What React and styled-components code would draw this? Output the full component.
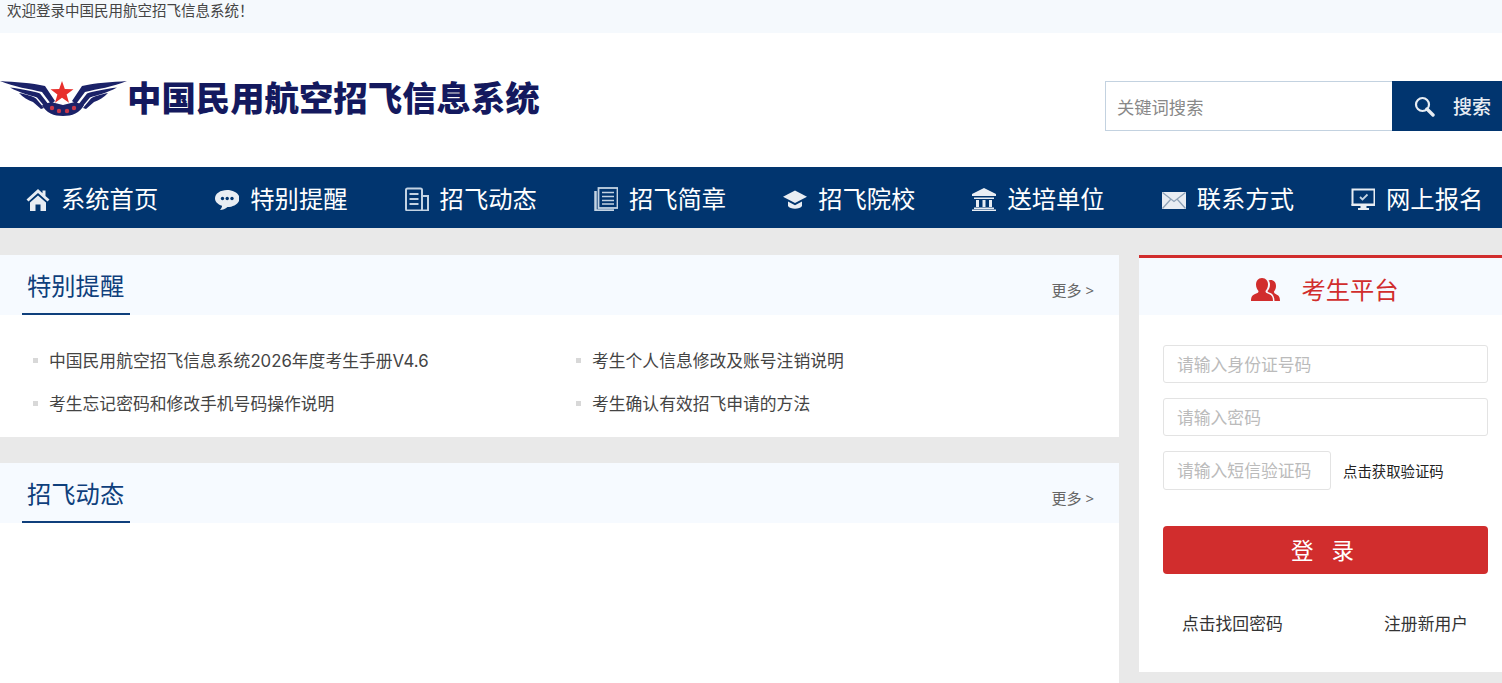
import React from 'react';
import styled, { createGlobalStyle } from 'styled-components';

const GlobalStyle = createGlobalStyle`
  html, body {
    margin: 0;
    padding: 0;
    height: 100%;
    overflow: hidden;
    background: #ffffff;
  }
  * {
    box-sizing: border-box;
  }
  body {
    font-family: 'Noto Sans', 'Noto Sans CJK SC', sans-serif;
  }
`;

const Page = styled.div`
  display: flex;
  flex-direction: column;
  width: 1502px;
  height: 683px;
  overflow: hidden;
`;

const TopBar = styled.div`
  flex: none;
  height: 33px;
  padding-left: 7px;
  background: #f5f9fd;
  color: #444;
  font-size: 14.5px;
  line-height: 20px;
`;

const Header = styled.header`
  flex: none;
  display: flex;
  justify-content: space-between;
  align-items: flex-start;
  height: 134px;
  padding-top: 48px;
`;

const Brand = styled.div`
  display: flex;
  align-items: center;
  height: 36px;
`;

const BrandName = styled.span`
  margin: -2px 0 0 -1px;
  color: #14195e;
  font-size: 34.4px;
  font-weight: 900;
  line-height: 36px;
  white-space: nowrap;
`;

const SearchBox = styled.form`
  display: flex;
  width: 397px;
  height: 50px;
  margin: 0;
`;

const SearchInput = styled.input`
  width: 287px;
  height: 50px;
  padding: 2px 11px 0;
  border: 1px solid #c3d2e0;
  border-right: none;
  outline: none;
  font-family: inherit;
  font-size: 17.3px;
  color: #444;

  &::placeholder {
    color: #888;
    opacity: 1;
  }
`;

const SearchButton = styled.button`
  display: flex;
  align-items: center;
  width: 110px;
  height: 50px;
  padding: 0 0 0 22px;
  gap: 18px;
  border: none;
  background: #01356f;
  color: #e8edf3;
  font-family: inherit;
  font-size: 19px;
  font-weight: 500;
`;

const Nav = styled.nav`
  flex: none;
  display: grid;
  grid-template-columns: repeat(8, 189.3px);
  height: 61px;
  padding-left: 26px;
  background: #01356f;
`;

const NavItem = styled.a`
  display: flex;
  align-items: center;
  gap: 11px;
  padding-top: 3px;
  color: #ffffff;
  font-size: 24.3px;
  line-height: 32px;
  white-space: nowrap;
`;

const NavIcon = styled.svg`
  flex: none;
  width: 24px;
  height: 24px;
`;

const Main = styled.main`
  flex: 1;
  display: flex;
  gap: 20px;
  padding-top: 27px;
  background: #e9e9e9;
  min-height: 0;
`;

const LeftColumn = styled.div`
  display: flex;
  flex-direction: column;
  gap: 26px;
  width: 1119px;
`;

const Panel = styled.section`
  flex: ${(p) => (p.$fill ? 1 : 'none')};
  background: #ffffff;
`;

const PanelHead = styled.div`
  display: flex;
  justify-content: space-between;
  align-items: flex-start;
  height: 60px;
  padding: 0 25px 0 22px;
  background: #f6faff;
`;

const PanelTitle = styled.h2`
  width: 108px;
  height: 60px;
  margin: 0;
  padding: 14px 0 0 5px;
  border-bottom: 2px solid #0f3f7c;
  color: #0f3f7c;
  font-size: 24.3px;
  font-weight: 400;
  line-height: 34px;
  white-space: nowrap;
`;

const More = styled.a`
  margin-top: 25px;
  color: #666;
  font-size: 15px;
  line-height: 20px;
`;

const NoticeList = styled.ul`
  display: grid;
  grid-template-columns: 543px 1fr;
  grid-auto-rows: 43px;
  height: 122px;
  margin: 0;
  padding: 24px 0 0 33px;
  list-style: none;
`;

const Notice = styled.li`
  display: flex;
  align-items: center;
  gap: 11px;
  height: 43px;
  color: #444;
  font-family: Inter, 'Noto Sans CJK SC', sans-serif;
  font-size: 16.8px;
  line-height: 24px;
  white-space: nowrap;

  &::before {
    content: '';
    flex: none;
    width: 5px;
    height: 5px;
    background: #d8d8d8;
  }
`;

const LoginPanel = styled.aside`
  width: 363px;
  height: 417px;
  border-top: 3px solid #d12d2d;
  background: #ffffff;
`;

const LoginHead = styled.div`
  display: flex;
  justify-content: center;
  align-items: center;
  gap: 21px;
  height: 57px;
  padding: 6px 0 0 9px;
  background: #f6faff;
  color: #d12d2d;
  font-size: 24.3px;
  line-height: 34px;
`;

const LoginForm = styled.form`
  display: flex;
  flex-direction: column;
  gap: 15px;
  width: 325px;
  margin: 30px 0 0 24px;
`;

const Field = styled.input`
  width: ${(p) => p.$width || '325px'};
  height: ${(p) => p.$height || '38px'};
  padding: 0 13px;
  border: 1px solid #e3e3e3;
  border-radius: 3px;
  outline: none;
  font-family: inherit;
  font-size: 16.8px;
  color: #444;

  &::placeholder {
    color: #bbbbbb;
    opacity: 1;
  }
`;

const CodeRow = styled.div`
  display: flex;
  align-items: center;
  gap: 12px;
`;

const CodeLink = styled.a`
  color: #222;
  font-size: 14.4px;
  white-space: nowrap;
`;

const LoginButton = styled.button`
  width: 325px;
  height: 48px;
  margin-top: 21px;
  padding: 0 6px 2px 0;
  border: none;
  border-radius: 4px;
  background: #d12d2d;
  color: #ffffff;
  font-family: inherit;
  font-size: 22.5px;
  word-spacing: 12px;
  white-space: pre;
`;

const LoginLinks = styled.div`
  display: flex;
  justify-content: space-between;
  padding: 38px 34px 0 43px;
  color: #333;
  font-size: 16.8px;
  line-height: 24px;
`;

const LIGHT = '#e8edf3';
const LINE = '#c3d3e3';
const NAVY = '#01356f';
const WING = '#1b2268';

const WingHalf = ({ flip }) => (
  <g fill={WING} transform={flip ? 'translate(127 0) scale(-1 1)' : undefined}>
    <path d="M0 0 C15 1 32 2 45 5 L55 20 L51 23 L42 11 C30 8 14 6 0 0z" />
    <path d="M10 6.500 C22 8 33 10 40 12.500 L49 24 L45 26 L37 16.500 C30 14 20 12 10 6.500z" />
    <path d="M19 12 C27 13.500 32 15 36 17.500 L44 27 L41 28 L33 21 C28 19 23 16.500 19 12z" />
  </g>
);

// wings, star and the bar with its four dots
const Logo = () => (
  <svg width="128" height="36" viewBox="0 0 128 36">
    <WingHalf />
    <WingHalf flip />
    <path d="M42 24 C46 32 54 35 63 35 C72 35 80 32 84 24 L75 21 L63 24 L51 21z" fill={WING} />
    <path d="M62 0 L64.800 8 L73.500 8.200 L66.600 13.400 L69 21.800 L62 16.800 L55 21.800 L57.400 13.400 L50.500 8.200 L59.200 8z" fill="#e8302c" />
    <circle cx="52" cy="27" r="2.200" fill="#c8384a" />
    <circle cx="59" cy="30" r="2.200" fill="#c8384a" />
    <circle cx="67" cy="30" r="2.200" fill="#c8384a" />
    <circle cx="74" cy="27" r="2.200" fill="#c8384a" />
  </svg>
);

const navLinks = [
  {
    text: '系统首页',
    icon: (
      <>
        <path d="M12 2 L0.5 12.5 L2.5 14.5 L12 6 L21.5 14.5 L23.5 12.5 L19.5 9 V3.5 H16.5 V6.2z" fill={LIGHT} />
        <path d="M4 15.5 L12 8.5 L20 15.5 V24 H14.5 V17.500 H9.5 V24 H4z" fill={LIGHT} />
      </>
    ),
  },
  {
    text: '特别提醒',
    icon: (
      <>
        <path d="M12 3 C18.500 3 24.500 6.500 24.500 11.500 C24.500 16.500 18.500 20 12.500 20 C10.500 22 7.500 23 5 23 C6.500 21.500 7 20 7 18.800 C2.500 17.300 0 14.500 0 11.500 C0 6.500 5.500 3 12 3z" fill={LIGHT} />
        <circle cx="7.500" cy="11.500" r="1.700" fill={NAVY} />
        <circle cx="12.200" cy="11.500" r="1.700" fill={NAVY} />
        <circle cx="17" cy="11.500" r="1.700" fill={NAVY} />
      </>
    ),
  },
  {
    text: '招飞动态',
    icon: (
      <g fill="none" stroke={LINE} strokeWidth="2">
        <rect x="1" y="1.500" width="16" height="22" rx="1.500" />
        <path d="M17 9 H23 V23.500 H17 M4.500 7 H13.500 M4.500 12 H13.500 M4.500 17 H13.500" />
      </g>
    ),
  },
  {
    text: '招飞简章',
    icon: (
      <g fill="none" stroke={LINE}>
        <path d="M1.500 4 V23.500 H20" strokeWidth="2.500" />
        <rect x="4.500" y="1" width="19" height="20" strokeWidth="1.800" />
        <path d="M8 5.500 H20 M8 9.500 H20 M8 13.500 H20 M8 17 H20" strokeWidth="1.500" />
      </g>
    ),
  },
  {
    text: '招飞院校',
    icon: (
      <>
        <path d="M12 3.500 L24 9.800 L12 16 L0 9.800z" fill={LIGHT} />
        <path d="M5 14.500 V19 C7 22.500 17 22.500 19 19 V14.500 L12 18.200z" fill={LIGHT} />
      </>
    ),
  },
  {
    text: '送培单位',
    icon: (
      <>
        <path d="M12 1 L24 7 V9 H0 V7z" fill={LIGHT} />
        <path d="M2 10.500 H22 V12 H2z M4 13 H7 V20 H4z M10.500 13 H13.500 V20 H10.500z M17 13 H20 V20 H17z M2 20.500 H22 V22 H2z M0 22.500 H24 V24 H0z" fill={LIGHT} />
      </>
    ),
  },
  {
    text: '联系方式',
    icon: (
      <>
        <rect x="0" y="5" width="24" height="17" fill={LIGHT} />
        <path d="M0.500 5.500 L12 14.500 L23.500 5.500 M0.500 21.500 L9 12 M23.500 21.500 L15 12" fill="none" stroke="#8fa3b8" strokeWidth="1.300" />
      </>
    ),
  },
  {
    text: '网上报名',
    icon: (
      <>
        <rect x="1.500" y="2.500" width="22" height="15" fill="none" stroke={LIGHT} strokeWidth="2" />
        <path d="M9 10 L11.500 12.500 L16.500 7.500" fill="none" stroke={LINE} strokeWidth="1.800" />
        <path d="M0.500 17 H24.500 V19 H15.500 V21 H18 V23 H7 V21 H9.500 V19 H0.500z" fill={LIGHT} />
      </>
    ),
  },
];

const notices = [
  '中国民用航空招飞信息系统2026年度考生手册V4.6',
  '考生个人信息修改及账号注销说明',
  '考生忘记密码和修改手机号码操作说明',
  '考生确认有效招飞申请的方法',
];

const App = () => (
  <Page>
    <GlobalStyle />
    <TopBar>欢迎登录中国民用航空招飞信息系统！</TopBar>
    <Header>
      <Brand>
        <Logo />
        <BrandName>中国民用航空招飞信息系统</BrandName>
      </Brand>
      <SearchBox>
        <SearchInput type="text" placeholder="关键词搜索" />
        <SearchButton type="button">
          <svg width="21" height="21" viewBox="0 0 21 21">
            <circle cx="8.500" cy="8.500" r="6.500" fill="none" stroke="#e8edf3" strokeWidth="2.200" />
            <path d="M13 13 L19 19" stroke="#e8edf3" strokeWidth="3.400" strokeLinecap="round" />
          </svg>
          搜索
        </SearchButton>
      </SearchBox>
    </Header>
    <Nav>
      {navLinks.map((link) => (
        <NavItem key={link.text}>
          <NavIcon viewBox="0 0 24 24">{link.icon}</NavIcon>
          {link.text}
        </NavItem>
      ))}
    </Nav>
    <Main>
      <LeftColumn>
        <Panel>
          <PanelHead>
            <PanelTitle>特别提醒</PanelTitle>
            <More>更多 &gt;</More>
          </PanelHead>
          <NoticeList>
            {notices.map((text) => (
              <Notice key={text}>{text}</Notice>
            ))}
          </NoticeList>
        </Panel>
        <Panel $fill>
          <PanelHead>
            <PanelTitle>招飞动态</PanelTitle>
            <More>更多 &gt;</More>
          </PanelHead>
        </Panel>
      </LeftColumn>
      <LoginPanel>
        <LoginHead>
          <svg width="29" height="23" viewBox="0 0 29 23">
            <path d="M11 0 C15 0 17 3 17 6.500 C17 9.500 15.800 11.500 14.500 13 C14.500 14.500 15 15 18 16 C20.500 17 22 18.500 22 23 H0 C0 18.500 1.500 17 4 16 C7 15 7.500 14.500 7.500 13 C6.200 11.500 5 9.500 5 6.500 C5 3 7 0 11 0z" fill="#d12d2d" />
            <path d="M19.500 2 C23 2 25 4.500 25 8 C25 10.500 24 12.500 23 13.500 C23 15 23.500 15.500 25.500 16.500 C27.500 17.500 29 18.500 29 23 H23.500 C23.500 19 22 16 19.500 15 C17 14 16.500 13.800 16.500 13 C18 11.500 19 9.500 19 6.500 C19 5 18.500 3.500 17.500 2.500 C18 2.200 18.700 2 19.500 2z" fill="#d12d2d" />
          </svg>
          考生平台
        </LoginHead>
        <LoginForm>
          <Field type="text" placeholder="请输入身份证号码" />
          <Field type="text" placeholder="请输入密码" />
          <CodeRow>
            <Field $width="168px" $height="39px" type="text" placeholder="请输入短信验证码" />
            <CodeLink>点击获取验证码</CodeLink>
          </CodeRow>
          <LoginButton type="button">登 录</LoginButton>
        </LoginForm>
        <LoginLinks>
          <span>点击找回密码</span>
          <span>注册新用户</span>
        </LoginLinks>
      </LoginPanel>
    </Main>
  </Page>
);

export default App;
